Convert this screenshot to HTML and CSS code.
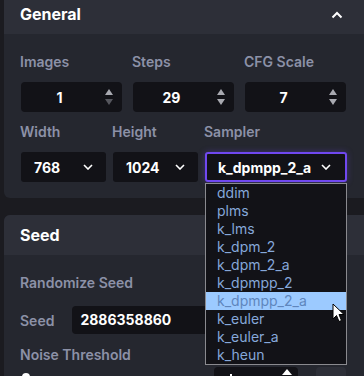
FILE: index.html
```html
<!DOCTYPE html>
<html lang="en">
<head>
    <meta charset="UTF-8">
    <meta name="viewport" content="width=device-width, initial-scale=1.0">
    <title>Options</title>
    <link rel="stylesheet" href="styles.css">
</head>
<body>
    <div class="options">
        <section class="panel panel-first">
            <div class="panel-head">
                <h2>General</h2>
                <svg class="chevron-up" width="12" height="8" viewBox="0 0 12 8"><path d="M1.5 6.5 L6 2 L10.5 6.5" fill="none" stroke="#fff" stroke-width="2"/></svg>
            </div>
            <div class="panel-body">
                <div class="row row-three">
                    <div class="field">
                        <label>Images</label>
                        <div class="number-input">
                            <span class="value">1</span>
                            <span class="stepper">
                                <i class="arrow-up"></i>
                                <i class="arrow-down disabled"></i>
                            </span>
                        </div>
                    </div>
                    <div class="field">
                        <label>Steps</label>
                        <div class="number-input">
                            <span class="value">29</span>
                            <span class="stepper">
                                <i class="arrow-up"></i>
                                <i class="arrow-down"></i>
                            </span>
                        </div>
                    </div>
                    <div class="field">
                        <label>CFG Scale</label>
                        <div class="number-input">
                            <span class="value">7</span>
                            <span class="stepper">
                                <i class="arrow-up"></i>
                                <i class="arrow-down"></i>
                            </span>
                        </div>
                    </div>
                </div>

                <div class="row row-size">
                    <div class="field">
                        <label>Width</label>
                        <div class="select">
                            <span>768</span>
                            <svg width="10" height="6" viewBox="0 0 10 6"><path d="M1 1 L5 5 L9 1" fill="none" stroke="#fff" stroke-width="1.6"/></svg>
                        </div>
                    </div>
                    <div class="field">
                        <label>Height</label>
                        <div class="select">
                            <span>1024</span>
                            <svg width="10" height="6" viewBox="0 0 10 6"><path d="M1 1 L5 5 L9 1" fill="none" stroke="#fff" stroke-width="1.6"/></svg>
                        </div>
                    </div>
                    <div class="field sampler">
                        <label>Sampler</label>
                        <div class="select select-open">
                            <span>k_dpmpp_2_a</span>
                            <svg width="10" height="6" viewBox="0 0 10 6"><path d="M1 1 L5 5 L9 1" fill="none" stroke="#fff" stroke-width="1.6"/></svg>
                        </div>
                        <ul class="dropdown">
                            <li>ddim</li>
                            <li>plms</li>
                            <li>k_lms</li>
                            <li>k_dpm_2</li>
                            <li>k_dpm_2_a</li>
                            <li>k_dpmpp_2</li>
                            <li class="active">k_dpmpp_2_a</li>
                            <li>k_euler</li>
                            <li>k_euler_a</li>
                            <li>k_heun</li>
                        </ul>
                        <svg class="cursor" width="14" height="20" viewBox="0 0 14 20"><path d="M1 1 L1 16 L4.5 12.5 L7 18.5 L9.5 17.5 L7 11.5 L12 11.5 Z" fill="#fff" stroke="#000" stroke-width="1" stroke-linejoin="round"/></svg>
                    </div>
                </div>
            </div>
        </section>

        <section class="panel">
            <div class="panel-head">
                <h2>Seed</h2>
            </div>
            <div class="panel-body seed-body">
                <label>Randomize Seed</label>
                <div class="seed-row">
                    <label>Seed</label>
                    <div class="seed-input">2886358860</div>
                </div>
                <label>Noise Threshold</label>
                <div class="slider-row">
                    <span class="thumb"></span>
                    <div class="small-input">
                        <span class="mark"></span>
                        <i class="arrow-up light"></i>
                    </div>
                    <div class="reset-btn"></div>
                </div>
            </div>
        </section>
    </div>
</body>
</html>
```

FILE: styles.css
```css
:root {
    --page-bg: #1b1b20;
    --head-bg: #2d2f38;
    --body-bg: #25272f;
    --input-bg: #121217;
    --label-color: #8c91a7;
    --accent: #7048f0;
}

* {
    margin: 0;
    padding: 0;
    box-sizing: border-box;
}

body {
    background-color: var(--page-bg);
    font-family: Inter, "Noto Sans", sans-serif;
    color: #fff;
    overflow: hidden;
    height: 376px;
}

.options {
    padding-left: 4px;
    margin-right: -10px;
    display: flex;
    flex-direction: column;
    gap: 17px;
}

.panel {
    background-color: var(--body-bg);
    border-radius: 6px;
}

.panel-first {
    margin-top: -6px;
}

.panel-head {
    height: 40px;
    background-color: var(--head-bg);
    border-radius: 6px 6px 0 0;
    padding: 0 16px;
    display: flex;
    align-items: center;
}

.panel-head h2 {
    font-size: 16px;
    font-weight: 700;
    flex: 1;
}

.chevron-up {
    margin-right: 15px;
    margin-top: 1px;
}

.panel-body {
    padding: 19px 27px 16px 16px;
}

label {
    display: block;
    font-size: 14px;
    line-height: 17px;
    font-weight: 600;
    color: var(--label-color);
}

.row {
    display: grid;
}

.row-three {
    grid-template-columns: 102px 102px 102px;
    column-gap: 10px;
}

.row-size {
    grid-template-columns: 86px 86px 143px;
    column-gap: 6px;
    margin-top: 11px;
}

.field {
    display: flex;
    flex-direction: column;
    gap: 12px;
}

.number-input {
    height: 30px;
    margin-left: 1px;
    background-color: var(--input-bg);
    border-radius: 4px;
    display: flex;
    align-items: center;
    padding-right: 9px;
}

.number-input .value {
    flex: 1;
    text-align: center;
    font-size: 14px;
    font-weight: 700;
    margin-right: 7px;
}

.stepper {
    display: flex;
    flex-direction: column;
    gap: 4px;
}

.arrow-up,
.arrow-down {
    display: block;
    width: 0;
    height: 0;
    border-left: 4px solid transparent;
    border-right: 4px solid transparent;
}

.arrow-up {
    border-bottom: 6px solid #a8a9b0;
}

.arrow-down {
    border-top: 6px solid #a8a9b0;
}

.arrow-down.disabled {
    border-top-color: #55565d;
}

.select {
    height: 30px;
    margin-left: 1px;
    background-color: var(--input-bg);
    border-radius: 3px;
    display: flex;
    align-items: center;
    justify-content: space-between;
    padding: 0 13px;
    font-size: 14px;
    font-weight: 700;
}

.select-open {
    border: 2px solid var(--accent);
    padding: 0 14px 0 11px;
    box-shadow: 0 0 6px rgba(112, 72, 240, 0.35);
}

.sampler {
    position: relative;
}

.dropdown {
    position: absolute;
    left: 1px;
    right: 0;
    top: 60px;
    list-style: none;
    background-color: var(--input-bg);
    border: 1px solid #8a8a8f;
    z-index: 10;
}

.dropdown li {
    height: 18px;
    line-height: 18px;
    padding-left: 11px;
    font-size: 14px;
    color: #86a8da;
}

.dropdown li.active {
    background-color: #9ccaff;
    color: #5f86bd;
}

.cursor {
    position: absolute;
    left: 128px;
    top: 180px;
    z-index: 11;
}

.seed-body {
    padding-top: 19px;
}

.seed-row {
    display: flex;
    align-items: center;
    gap: 18px;
    margin: 15px 0 12px;
}

.seed-input {
    width: 220px;
    height: 28px;
    background-color: var(--input-bg);
    border-radius: 4px;
    padding-left: 8px;
    font-size: 14px;
    font-weight: 700;
    line-height: 28px;
}

.slider-row {
    display: flex;
    align-items: flex-start;
    margin-top: 4px;
    height: 12px;
}

.thumb {
    width: 8px;
    height: 8px;
    margin-top: 6px;
    margin-left: 2px;
    border-radius: 50%;
    background-color: #fff;
}

.small-input {
    width: 84px;
    height: 20px;
    margin-left: 184px;
    background-color: var(--input-bg);
    border-radius: 4px;
    display: flex;
    justify-content: space-between;
    padding: 0 6px 0 16px;
}

.mark {
    width: 2px;
    height: 2px;
    margin-top: 7px;
    background-color: #fff;
}

.arrow-up.light {
    border-bottom-color: #fff;
    border-left-width: 5px;
    border-right-width: 5px;
    margin-top: 2px;
}

.reset-btn {
    width: 30px;
    height: 20px;
    margin-left: 18px;
    border-radius: 4px;
    background-color: #2d2f38;
}
```
